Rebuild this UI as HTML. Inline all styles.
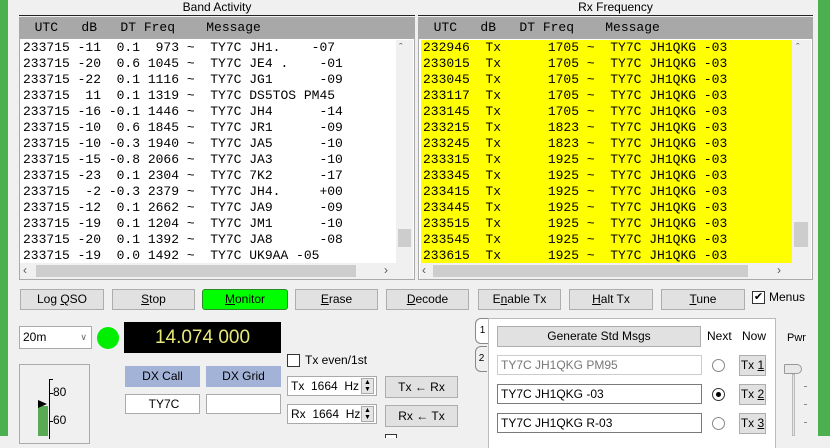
<!DOCTYPE html>
<html><head><style>
*{margin:0;padding:0;box-sizing:border-box}
body{width:830px;height:436px;overflow:hidden;background:#f0f0f0;position:relative;font-family:"Liberation Sans",sans-serif;font-size:12px;color:#000}
.a{position:absolute}
.mono{font-family:"Liberation Mono",monospace;font-size:13px;white-space:pre;line-height:16px}
.hdr{background:#a8a8a8;height:21px;line-height:21px}
.btn{position:absolute;height:21px;border:1px solid #adadad;background:#e1e1e1;text-align:center;line-height:19px;font-size:12px}
.sb{background:#f0f0f0}
.in{position:absolute;background:#fff;border:1px solid #7a7a7a;height:20px;line-height:18px;padding-left:3px;font-size:12px}
.rad{position:absolute;width:13px;height:13px;border:1px solid #333;border-radius:50%;background:#fff}
</style></head><body>
<div class="a" style="left:0;top:0;width:8px;height:436px;background:#4caf50"></div>
<div class="a" style="left:818px;top:0;width:12px;height:436px;background:#4caf50"></div>

<!-- Band activity -->
<div class="a" style="left:19px;top:0;width:396px;text-align:center;font-size:12px;line-height:15px">Band Activity</div>
<div class="a" style="left:19px;top:15px;width:396px;height:1px;background:#222"></div>
<div class="a hdr mono" style="left:19px;top:17px;width:396px;line-height:21px">  UTC   dB   DT Freq    Message</div>
<div class="a" style="left:19px;top:38px;width:396px;height:242px;border:1px solid #aaa;background:#fff"></div>
<div class="a mono" style="left:23px;top:40px">233715 -11  0.1  973 ~  TY7C JH1.    -07
233715 -20  0.6 1045 ~  TY7C JE4 .    -01
233715 -22  0.1 1116 ~  TY7C JG1      -09
233715  11  0.1 1319 ~  TY7C DS5TOS PM45
233715 -16 -0.1 1446 ~  TY7C JH4      -14
233715 -10  0.6 1845 ~  TY7C JR1      -09
233715 -10 -0.3 1940 ~  TY7C JA5      -10
233715 -15 -0.8 2066 ~  TY7C JA3      -10
233715 -23  0.1 2304 ~  TY7C 7K2      -17
233715  -2 -0.3 2379 ~  TY7C JH4.     +00
233715 -12  0.1 2662 ~  TY7C JA9      -09
233715 -19  0.1 1204 ~  TY7C JM1      -10
233715 -20  0.1 1392 ~  TY7C JA8      -08
233715 -19  0.0 1492 ~  TY7C UK9AA -05</div>
<div class="a sb" style="left:396px;top:40px;width:17px;height:223px"></div>
<div class="a" style="left:398px;top:229px;width:13px;height:18px;background:#cdcdcd"></div>
<div class="a" style="left:399px;top:42px;color:#666;font-size:11px">&#710;</div>
<div class="a sb" style="left:20px;top:263px;width:393px;height:16px"></div>
<div class="a" style="left:36px;top:265px;width:320px;height:12px;background:#cdcdcd"></div>
<div class="a" style="left:23px;top:263px;color:#555">&lsaquo;</div>
<div class="a" style="left:384px;top:263px;color:#555">&rsaquo;</div>

<!-- Rx Frequency -->
<div class="a" style="left:418px;top:0;width:395px;text-align:center;line-height:15px">Rx Frequency</div>
<div class="a" style="left:418px;top:15px;width:395px;height:1px;background:#222"></div>
<div class="a hdr mono" style="left:418px;top:17px;width:395px;line-height:21px">  UTC   dB   DT Freq    Message</div>
<div class="a" style="left:418px;top:38px;width:395px;height:242px;border:1px solid #aaa;background:#fff"></div>
<div class="a" style="left:421px;top:40px;width:371px;height:223px;background:#ffff00"></div>
<div class="a mono" style="left:423px;top:40px">232946  Tx      1705 ~  TY7C JH1QKG -03
233015  Tx      1705 ~  TY7C JH1QKG -03
233045  Tx      1705 ~  TY7C JH1QKG -03
233117  Tx      1705 ~  TY7C JH1QKG -03
233145  Tx      1705 ~  TY7C JH1QKG -03
233215  Tx      1823 ~  TY7C JH1QKG -03
233245  Tx      1823 ~  TY7C JH1QKG -03
233315  Tx      1925 ~  TY7C JH1QKG -03
233345  Tx      1925 ~  TY7C JH1QKG -03
233415  Tx      1925 ~  TY7C JH1QKG -03
233445  Tx      1925 ~  TY7C JH1QKG -03
233515  Tx      1925 ~  TY7C JH1QKG -03
233545  Tx      1925 ~  TY7C JH1QKG -03
233615  Tx      1925 ~  TY7C JH1QKG -03</div>
<div class="a sb" style="left:792px;top:40px;width:19px;height:223px"></div>
<div class="a" style="left:794px;top:222px;width:14px;height:25px;background:#cdcdcd"></div>
<div class="a" style="left:796px;top:42px;color:#666;font-size:11px">&#710;</div>
<div class="a sb" style="left:420px;top:263px;width:391px;height:16px"></div>
<div class="a" style="left:433px;top:265px;width:315px;height:12px;background:#cdcdcd"></div>
<div class="a" style="left:422px;top:263px;color:#555">&lsaquo;</div>
<div class="a" style="left:777px;top:263px;color:#555">&rsaquo;</div>

<!-- buttons -->
<div class="btn" style="left:20px;top:289px;width:84px">Log <u>Q</u>SO</div>
<div class="btn" style="left:112px;top:289px;width:83px"><u>S</u>top</div>
<div class="btn" style="left:202px;top:289px;width:86px;background:#00ff00;border-color:#2a8a2a;border-radius:3px"><u>M</u>onitor</div>
<div class="btn" style="left:295px;top:289px;width:83px"><u>E</u>rase</div>
<div class="btn" style="left:386px;top:289px;width:83px"><u>D</u>ecode</div>
<div class="btn" style="left:478px;top:289px;width:83px">E<u>n</u>able Tx</div>
<div class="btn" style="left:569px;top:289px;width:84px"><u>H</u>alt Tx</div>
<div class="btn" style="left:661px;top:289px;width:84px"><u>T</u>une</div>
<div class="a" style="left:752px;top:291px;width:13px;height:13px;border:1px solid #333;background:#fff;font-size:11px;line-height:11px;text-align:center">&#10004;</div>
<div class="a" style="left:769px;top:290px">Menus</div>

<!-- band/freq -->
<div class="in" style="left:19px;top:326px;width:73px;height:23px;line-height:21px;border-color:#aaa">20m<span style="position:absolute;right:4px;color:#666;font-size:9px">&#8744;</span></div>
<div class="a" style="left:97px;top:327px;width:22px;height:22px;border-radius:50%;background:#00ee00"></div>
<div class="a" style="left:124px;top:322px;width:157px;height:31px;background:#000;color:#e8e87a;font-size:19px;text-align:center;line-height:31px">14.074 000</div>

<div class="a" style="left:19px;top:364px;width:71px;height:80px;border:1px solid #aaa"></div>
<div class="a" style="left:49px;top:379px;width:1px;height:60px;background:#000"></div>
<div class="a" style="left:49px;top:379px;width:4px;height:1px;background:#000"></div>
<div class="a" style="left:49px;top:393px;width:4px;height:1px;background:#000"></div>
<div class="a" style="left:49px;top:421px;width:4px;height:1px;background:#000"></div>
<div class="a" style="left:53px;top:385px;font-size:12px">80</div>
<div class="a" style="left:53px;top:413px;font-size:12px">60</div>
<div class="a" style="left:38px;top:406px;width:10px;height:30px;background:#5aaa55"></div>
<div class="a" style="left:38px;top:400px;width:0;height:0;border-top:4px solid transparent;border-bottom:4px solid transparent;border-left:9px solid #000"></div>

<div class="a" style="left:125px;top:366px;width:75px;height:21px;background:#a3b3d8;text-align:center;line-height:21px">DX Call</div>
<div class="a" style="left:206px;top:366px;width:75px;height:21px;background:#a3b3d8;text-align:center;line-height:21px">DX Grid</div>
<div class="in" style="left:125px;top:394px;width:75px;text-align:center;border-color:#aaa">TY7C</div>
<div class="in" style="left:206px;top:394px;width:75px;border-color:#aaa"></div>

<div class="a" style="left:287px;top:354px;width:13px;height:13px;border:1px solid #333;background:#fff"></div>
<div class="a" style="left:305px;top:353px">Tx even/1st</div>
<div class="in" style="left:287px;top:376px;width:90px;border-color:#aaa">Tx &nbsp;1664 &nbsp;Hz</div>
<div class="a" style="left:361px;top:378px;width:13px;height:16px;background:#e5e5e5;border:1px solid #aaa;font-size:7px;line-height:7px;text-align:center">&#9650;<br>&#9660;</div>
<div class="in" style="left:287px;top:404px;width:90px;border-color:#aaa">Rx &nbsp;1664 &nbsp;Hz</div>
<div class="a" style="left:361px;top:406px;width:13px;height:16px;background:#e5e5e5;border:1px solid #aaa;font-size:7px;line-height:7px;text-align:center">&#9650;<br>&#9660;</div>
<div class="btn" style="left:385px;top:376px;width:73px;height:22px;line-height:20px">Tx &#8592; Rx</div>
<div class="btn" style="left:385px;top:405px;width:73px;height:22px;line-height:20px">Rx &#8592; Tx</div>
<div class="a" style="left:385px;top:434px;width:12px;height:4px;border:1px solid #333;border-bottom:none;background:#fff"></div>

<!-- tabs panel -->
<div class="a" style="left:475px;top:318px;width:14px;height:26px;border:1px solid #888;border-right:none;border-radius:6px 0 0 6px;background:#fff;font-size:10px;line-height:24px;text-align:center;transform:none">1</div>
<div class="a" style="left:475px;top:346px;width:12px;height:26px;border:1px solid #888;border-right:none;border-radius:6px 0 0 6px;font-size:10px;line-height:24px;text-align:center">2</div>
<div class="a" style="left:488px;top:318px;width:288px;height:130px;border:1px solid #bbb;border-bottom:none;background:#fff"></div>
<div class="btn" style="left:497px;top:326px;width:204px;height:21px">Generate Std Msgs</div>
<div class="a" style="left:707px;top:329px">Next</div>
<div class="a" style="left:742px;top:329px">Now</div>
<div class="in" style="left:497px;top:355px;width:205px;border-color:#ccc;color:#777">TY7C JH1QKG PM95</div>
<div class="in" style="left:497px;top:384px;width:205px">TY7C JH1QKG -03</div>
<div class="in" style="left:497px;top:413px;width:205px">TY7C JH1QKG R-03</div>
<div class="rad" style="left:712px;top:359px;border-color:#888"></div>
<div class="rad" style="left:712px;top:388px"><div style="position:absolute;left:3px;top:3px;width:5px;height:5px;border-radius:50%;background:#000"></div></div>
<div class="rad" style="left:712px;top:417px;border-color:#888"></div>
<div class="btn" style="left:739px;top:355px;width:27px;height:21px;font-size:12px">Tx <u>1</u></div>
<div class="btn" style="left:739px;top:384px;width:27px;height:21px">Tx <u>2</u></div>
<div class="btn" style="left:739px;top:413px;width:27px;height:21px">Tx <u>3</u></div>
<div class="a" style="left:787px;top:332px;font-size:11px">Pwr</div>
<div class="a" style="left:784px;top:364px;width:18px;height:10px;border:1px solid #999;background:#e8e8e8;border-radius:1px 5px 5px 1px"></div>
<div class="a" style="left:792px;top:374px;width:3px;height:62px;border:1px solid #bbb;background:#e6e6e6"></div>
<div class="a" style="left:804px;top:386px;width:3px;height:1px;background:#888"></div>
<div class="a" style="left:804px;top:404px;width:3px;height:1px;background:#888"></div>
<div class="a" style="left:804px;top:422px;width:3px;height:1px;background:#888"></div>
</body></html>
